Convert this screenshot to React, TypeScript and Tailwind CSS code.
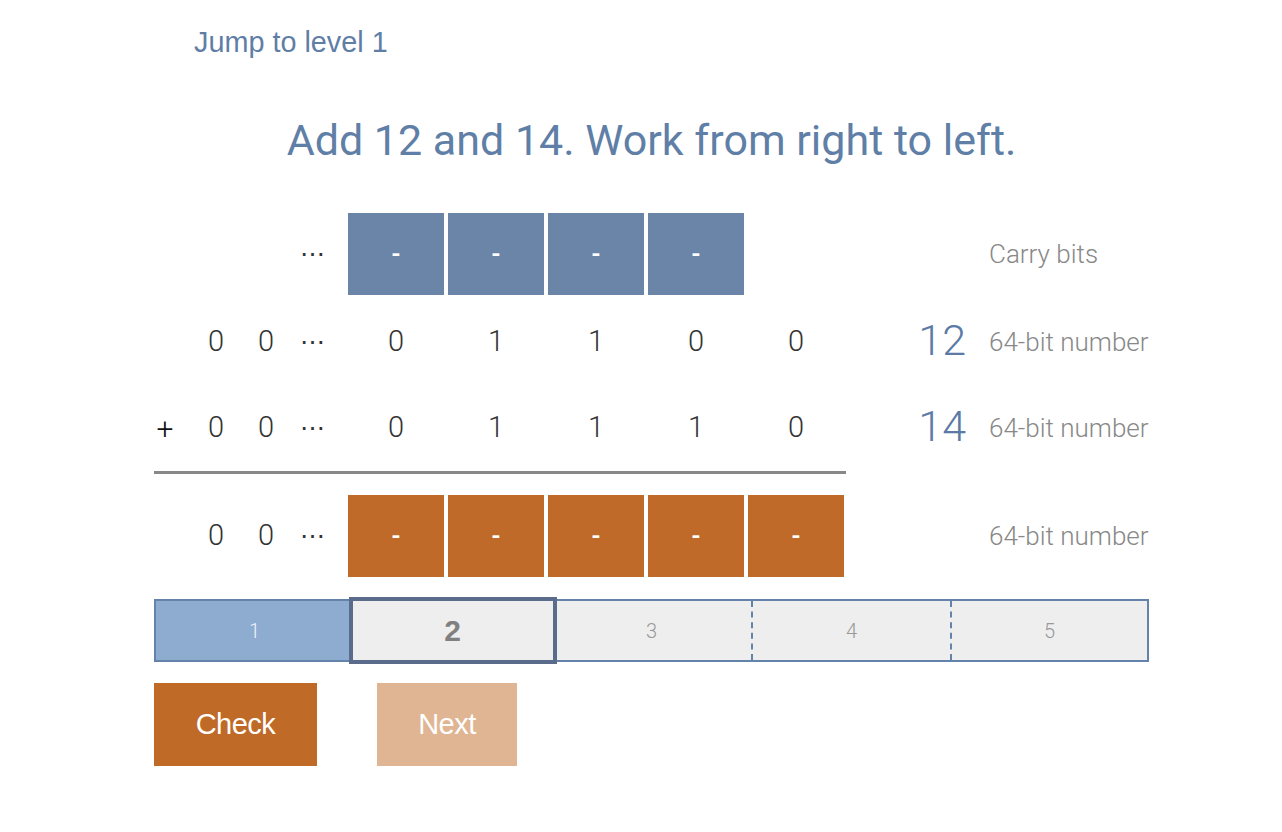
import React from 'react';

const carry = ['-', '-', '-', '-'];
const numA = ['0', '1', '1', '0', '0'];
const numB = ['0', '1', '1', '1', '0'];
const result = ['-', '-', '-', '-', '-'];

const roboto = { fontFamily: 'Roboto, "Noto Sans", sans-serif' };

// the columns to the left of the five bit cells
const Lead: React.FC<{ plus?: boolean; zeros?: boolean }> = ({ plus, zeros }) => (
  <>
    <div className="w-[22px] text-center text-[30px] font-light text-[#111]">{plus ? '+' : ''}</div>
    <div className="w-[15px]" />
    <div className="w-[50px] text-center">{zeros ? '0' : ''}</div>
    <div className="w-[50px] text-center">{zeros ? '0' : ''}</div>
    <div className="w-[42px] text-center text-[25px] text-[#333]" style={{ fontFamily: '"DejaVu Sans", sans-serif' }}>⋯</div>
    <div className="w-[13px]" />
  </>
);

const Side: React.FC<{ value?: string; label: string }> = ({ value, label }) => (
  <>
    <div className="w-[120px] text-right text-[43px] font-light text-[#5b7ba6] leading-none -mt-[3px]">{value}</div>
    <div className="ml-[23px] text-[26px] font-light text-[#888] whitespace-nowrap">{label}</div>
  </>
);

export default function App() {
  return (
    <div className="min-h-screen w-full bg-white" style={roboto}>
      <div className="pt-[26px] pl-[194px]">
        <a
          className="block text-[28.8px] leading-[32px] text-[#5f7ea6]"
          style={{ fontFamily: '"Liberation Sans", Arial, sans-serif' }}
        >
          Jump to level 1
        </a>
      </div>

      <div className="ml-[154px] w-[995px]">
        <h1 className="mt-[57px] text-center text-[43px] leading-[50px] font-normal text-[#5f7fa7]">
          Add 12 and 14. Work from right to left.
        </h1>

        {/* carry bits */}
        <div className="mt-[48px] flex items-center h-[82px] text-[29px] font-light text-[#333]">
          <Lead />
          <div className="flex w-[500px]">
            {carry.map((c, i) => (
              <div key={i} className="mx-[2px] w-[96px] h-[82px] bg-[#6b85a8] flex items-center justify-center text-white text-[24px] font-bold">
                {c}
              </div>
            ))}
          </div>
          <Side label="Carry bits" />
        </div>

        {/* first number */}
        <div className="mt-[4px] flex items-center h-[86px] text-[29px] font-light text-[#333]">
          <Lead zeros />
          <div className="flex w-[500px]">
            {numA.map((d, i) => (
              <div key={i} className="w-[100px] text-center">{d}</div>
            ))}
          </div>
          <Side value="12" label="64-bit number" />
        </div>

        {/* second number */}
        <div className="flex items-center h-[86px] text-[29px] font-light text-[#333]">
          <Lead plus zeros />
          <div className="flex w-[500px]">
            {numB.map((d, i) => (
              <div key={i} className="w-[100px] text-center">{d}</div>
            ))}
          </div>
          <Side value="14" label="64-bit number" />
        </div>

        <div className="w-[692px] h-[3px] bg-[#888]" />

        {/* answer */}
        <div className="mt-[21px] flex items-center h-[82px] text-[29px] font-light text-[#333]">
          <Lead zeros />
          <div className="flex w-[500px]">
            {result.map((c, i) => (
              <div key={i} className="mx-[2px] w-[96px] h-[82px] bg-[#bf6a28] flex items-center justify-center text-white text-[24px] font-bold">
                {c}
              </div>
            ))}
          </div>
          <Side label="64-bit number" />
        </div>

        {/* progress */}
        <div className="mt-[22px] flex h-[63px] border-2 border-[#6383ab]">
          <div className="w-[197px] bg-[#8eabd0] flex items-center justify-center text-[20px] font-light text-[#eef2f8]">1</div>
          <div className="relative w-[199px] bg-[#eeeeee] flex items-center justify-center">
            <div className="absolute -top-[4px] -bottom-[4px] -left-[4px] -right-[5px] border-4 border-[#5b6b8c]" />
            <span className="text-[30px] font-bold text-[#808080]" style={{ fontFamily: '"Liberation Sans", Arial, sans-serif' }}>2</span>
          </div>
          <div className="w-[199px] bg-[#eeeeee] flex items-center justify-center text-[20px] font-light text-[#999]">3</div>
          <div className="w-[199px] bg-[#eeeeee] border-l-2 border-dashed border-[#6383ab] flex items-center justify-center text-[20px] font-light text-[#999]">4</div>
          <div className="flex-1 bg-[#eeeeee] border-l-2 border-dashed border-[#6383ab] flex items-center justify-center text-[20px] font-light text-[#999]">5</div>
        </div>

        {/* buttons */}
        <div
          className="mt-[21px] flex gap-[60px]"
          style={{ fontFamily: '"Liberation Sans", Arial, sans-serif' }}
        >
          <button className="w-[163px] h-[83px] bg-[#bf6a27] text-white text-[29px] tracking-[-0.5px]">Check</button>
          <button className="w-[140px] h-[83px] bg-[#e0b593] text-white text-[29px] tracking-[-0.5px]">Next</button>
        </div>
      </div>
    </div>
  );
}
